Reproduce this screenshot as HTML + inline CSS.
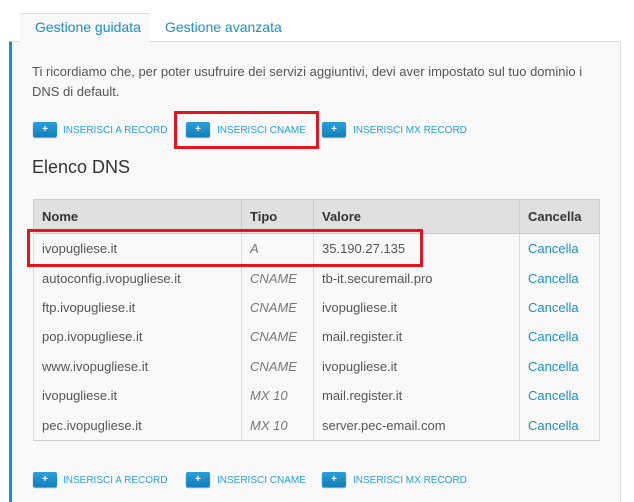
<!DOCTYPE html><html><head><style>
body{margin:0;width:634px;height:494px;background:#fff;font-family:"Liberation Sans",sans-serif;position:relative;overflow:hidden;color:#555}
.a{position:absolute}
.tab{top:13px;height:28px;font-size:14px;color:#1a8fcb;line-height:28px}
.panel{left:9px;top:41px;width:608px;height:460px;background:#f9f9f9;border-left:3px solid #1a8fcb;border-top:1px solid #ddd;border-right:1px solid #ddd}
.btn{width:24px;height:15px;background:linear-gradient(#2a9fd8,#137fb8);border-radius:2px;color:#fff;font-size:10px;font-weight:bold;text-align:center;line-height:15px;box-shadow:0 1px 1px #888}
.bt{font-size:10px;color:#2a9fd8;line-height:15px}
table{position:absolute;left:33px;top:199px;border-collapse:collapse;font-size:13px;width:567px}
td,th{border-left:1px solid #ddd;border-right:1px solid #ddd;padding:0 0 0 8px;height:29.4px;text-align:left}
th{background:#e0e0e0;color:#333;font-weight:bold;height:33px;border:1px solid #ccc}
tr:last-child td{border-bottom:1px solid #ccc}
td.t{font-style:italic;color:#777}
td.c{color:#1a8fcb}
.red{border:3px solid #e8131d}
</style></head><body>
<div class="a" style="left:20px;top:13px;width:128px;height:28px;background:#f9f9f9;border:1px solid #ddd;border-bottom:none"></div>
<div class="a panel"></div>
<div class="a" style="left:20px;top:14px;width:130px;height:29px;background:#f9f9f9"></div>
<div class="a tab" style="left:35px">Gestione guidata</div>
<div class="a tab" style="left:165px">Gestione avanzata</div>
<div class="a" style="left:32px;top:62px;width:580px;font-size:13px;line-height:20px;color:#555">Ti ricordiamo che, per poter usufruire dei servizi aggiuntivi, devi aver impostato sul tuo dominio i DNS di default.</div>
<div class="a btn" style="left:33px;top:122px">+</div><div class="a bt" style="left:63px;top:123px">INSERISCI A RECORD</div>
<div class="a btn" style="left:186px;top:122px">+</div><div class="a bt" style="left:217px;top:123px">INSERISCI CNAME</div>
<div class="a btn" style="left:322px;top:122px">+</div><div class="a bt" style="left:353px;top:123px">INSERISCI MX RECORD</div>
<div class="a red" style="left:174px;top:111px;width:139px;height:32px"></div>
<div class="a" style="left:32px;top:157px;font-size:18px;color:#333">Elenco DNS</div>
<table>
<tr><th style="width:199px">Nome</th><th style="width:63px">Tipo</th><th style="width:197px">Valore</th><th>Cancella</th></tr>
<tr><td>ivopugliese.it</td><td class="t">A</td><td>35.190.27.135</td><td class="c">Cancella</td></tr>
<tr><td>autoconfig.ivopugliese.it</td><td class="t">CNAME</td><td>tb-it.securemail.pro</td><td class="c">Cancella</td></tr>
<tr><td>ftp.ivopugliese.it</td><td class="t">CNAME</td><td>ivopugliese.it</td><td class="c">Cancella</td></tr>
<tr><td>pop.ivopugliese.it</td><td class="t">CNAME</td><td>mail.register.it</td><td class="c">Cancella</td></tr>
<tr><td>www.ivopugliese.it</td><td class="t">CNAME</td><td>ivopugliese.it</td><td class="c">Cancella</td></tr>
<tr><td>ivopugliese.it</td><td class="t">MX 10</td><td>mail.register.it</td><td class="c">Cancella</td></tr>
<tr><td>pec.ivopugliese.it</td><td class="t">MX 10</td><td>server.pec-email.com</td><td class="c">Cancella</td></tr>
</table>
<div class="a red" style="left:27px;top:229px;width:390px;height:32px"></div>
<div class="a btn" style="left:33px;top:472px">+</div><div class="a bt" style="left:63px;top:473px">INSERISCI A RECORD</div>
<div class="a btn" style="left:186px;top:472px">+</div><div class="a bt" style="left:217px;top:473px">INSERISCI CNAME</div>
<div class="a btn" style="left:322px;top:472px">+</div><div class="a bt" style="left:353px;top:473px">INSERISCI MX RECORD</div>
</body></html>
